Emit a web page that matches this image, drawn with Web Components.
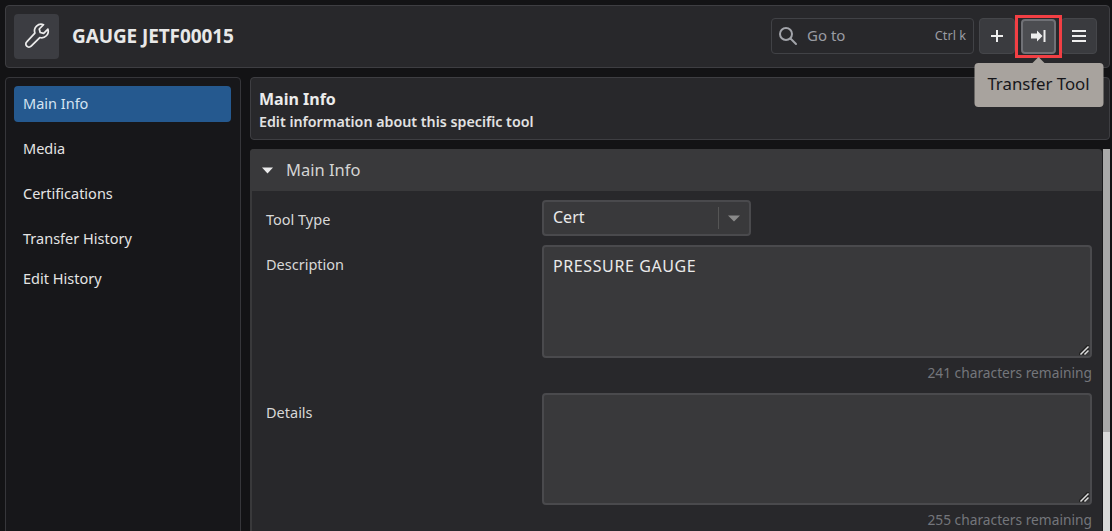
<!DOCTYPE html>
<html>
<head>
<meta charset="utf-8">
<style>
  html, body { margin: 0; height: 100%; overflow: hidden; }
  body { background: #131315; color: #e6e6e6; font: 14px "Noto Sans", sans-serif; }
</style>
</head>
<body>
<tool-app>
  <tool-header slot="header" title-text="GAUGE JETF00015"></tool-header>
  <side-nav slot="nav">
    <nav-item active>Main Info</nav-item>
    <nav-item>Media</nav-item>
    <nav-item>Certifications</nav-item>
    <nav-item>Transfer History</nav-item>
    <nav-item style="margin-top:-5px">Edit History</nav-item>
  </side-nav>
  <page-title slot="main" heading="Main Info" sub="Edit information about this specific tool"></page-title>
  <main-panel slot="main" heading="Main Info">
    <form-row label="Tool Type" style="margin-bottom:9px"><select-box value="Cert"></select-box></form-row>
    <form-row label="Description" style="margin-bottom:11px"><text-box value="PRESSURE GAUGE" remaining="241 characters remaining" box-height="113"></text-box></form-row>
    <form-row label="Details"><text-box remaining="255 characters remaining" box-height="112"></text-box></form-row>
  </main-panel>
</tool-app>
<script>
class ToolApp extends HTMLElement {
  constructor() {
    super();
    this.attachShadow({ mode: 'open' }).innerHTML = `
    <style>
      :host { display: flex; flex-direction: column; gap: 9px; padding: 5px 2px 0 5px; box-sizing: border-box; height: 531px; overflow: hidden; }
      .cols { display: flex; gap: 9px; flex: 1; min-height: 0; }
      .main { flex: 1; min-width: 0; display: flex; flex-direction: column; gap: 9px; }
    </style>
    <slot name="header"></slot>
    <div class="cols">
      <slot name="nav"></slot>
      <div class="main"><slot name="main"></slot></div>
    </div>`;
  }
}
customElements.define('tool-app', ToolApp);

class ToolHeader extends HTMLElement {
  connectedCallback() {
    this.attachShadow({ mode: 'open' }).innerHTML = `
    <style>
      :host { display: flex; align-items: center; height: 63px; box-sizing: border-box; background: #28282b; border: 1px solid #3e3e42; border-radius: 4px; padding: 0 12px 0 8px; }
      .logo { width: 45px; height: 45px; border-radius: 4px; background: #3c3d42; display: flex; align-items: center; justify-content: center; }
      h1 { margin: 0 0 2px 13px; font-size: 19px; font-weight: 700; color: #e8e8e8; flex: 1; letter-spacing: -.1px; }
      .search { width: 203px; height: 36px; margin-bottom: 1px; box-sizing: border-box; border: 1px solid #414246; border-radius: 4px; display: flex; align-items: center; padding: 0 7px 0 6px; color: #9a9ca3; }
      .search span { margin: 0 0 3px 9px; font-size: 15px; flex: 1; }
      .search small { font-size: 12.700px; margin-bottom: 3px; }
      .btn { width: 36px; height: 36px; margin-bottom: 1px; box-sizing: border-box; margin-left: 5px; background: #3a3b3f; border: 1px solid #45464a; border-radius: 4px; display: flex; align-items: center; justify-content: center; }
      .hot { position: relative; background: #4c4d51; border: 2px solid #707176; width: 35px; height: 35px; margin-left: 6px; margin-right: 5px; }
      .ring { position: absolute; inset: -6px -8px -6px -8px; border: 3px solid #f23f44; pointer-events: none; }
      .tip { position: absolute; top: 42px; left: 50%; transform: translateX(-50%); width: 129px; height: 44px; box-sizing: border-box; background: #a8a39e; color: #16161a; border-radius: 4px; display: flex; align-items: center; justify-content: center; font-size: 16.800px; white-space: nowrap; padding-bottom: 2px; }
      .tip::before { content: ""; position: absolute; top: -6px; left: 50%; margin-left: -6px; border: 6px solid transparent; border-top: 0; border-bottom-color: #a8a39e; }
    </style>
    <div class="logo">
      <svg width="32" height="32" viewBox="0 0 24 24" fill="none" stroke="#ececec" stroke-width="1.300" stroke-linejoin="round" stroke-linecap="round"><path d="M20.2 6.1l-3.2 3.2-2.6-.7-.7-2.6 3.2-3.2a5 5 0 0 0-6.5 6.3L4.300 15.600a2.300 2.300 0 0 0 3.300 3.300l6.500-6.500a5 5 0 0 0 6.100-6.300z"/></svg>
    </div>
    <h1>${this.getAttribute('title-text')}</h1>
    <div class="search">
      <svg width="20" height="20" viewBox="0 0 20 20" fill="none" stroke="#a2a4aa" stroke-width="2"><circle cx="8" cy="8" r="6"/><path d="M12.500 12.500L18 18" stroke-linecap="round"/></svg>
      <span>Go to</span><small>Ctrl k</small>
    </div>
    <div class="btn"><svg width="14" height="14" viewBox="0 0 14 14" stroke="#eee" stroke-width="2"><path d="M7 1v12M1 7h12"/></svg></div>
    <div class="btn hot">
      <svg width="15" height="12" viewBox="0 0 15 12"><path fill="#eee" d="M0 3.500h6V.500L11.500 6 6 11.500v-3H0z"/><rect x="12.500" y="0" width="2" height="12" fill="#eee"/></svg>
      <div class="ring"></div>
      <div class="tip">Transfer Tool</div>
    </div>
    <div class="btn" style="margin-left:0"><svg width="14" height="12" viewBox="0 0 14 12" fill="#eee"><rect y="0" width="14" height="2"/><rect y="5" width="14" height="2"/><rect y="10" width="14" height="2"/></svg></div>`;
  }
}
customElements.define('tool-header', ToolHeader);

class SideNav extends HTMLElement {
  constructor() {
    super();
    this.attachShadow({ mode: 'open' }).innerHTML = `
    <style>
      :host { display: flex; flex-direction: column; gap: 9px; width: 236px; box-sizing: border-box; background: #17171a; border: 1px solid #36363a; border-radius: 4px; padding: 8px 9px 0 8px; margin-bottom: -8px; }
    </style>
    <slot></slot>`;
  }
}
customElements.define('side-nav', SideNav);

class NavItem extends HTMLElement {
  constructor() {
    super();
    this.attachShadow({ mode: 'open' }).innerHTML = `
    <style>
      :host { display: flex; align-items: center; height: 36px; box-sizing: border-box; padding: 0 9px 2px; border-radius: 4px; color: #e4e4e4; font-size: 14.500px; }
      :host([active]) { background: #25598f; color: #d5e4f2; }
    </style>
    <slot></slot>`;
  }
}
customElements.define('nav-item', NavItem);

class PageTitle extends HTMLElement {
  connectedCallback() {
    this.attachShadow({ mode: 'open' }).innerHTML = `
    <style>
      :host { display: block; height: 63px; box-sizing: border-box; background: #28282b; border: 1px solid #3e3e42; border-radius: 4px; padding: 11px 8px 0; }
      b { display: block; font-size: 16px; line-height: 20px; color: #ececec; }
      span { display: block; font-size: 14.250px; font-weight: 600; line-height: 26px; color: #e2e2e2; }
    </style>
    <b>${this.getAttribute('heading')}</b>
    <span>${this.getAttribute('sub')}</span>`;
  }
}
customElements.define('page-title', PageTitle);

class MainPanel extends HTMLElement {
  connectedCallback() {
    this.attachShadow({ mode: 'open' }).innerHTML = `
    <style>
      :host { display: flex; flex: 1; min-height: 0; margin-bottom: -8px; }
      .panel { flex: 1; min-width: 0; background: #28282b; border-radius: 4px 4px 0 0; border-left: 2px solid #39393b; }
      .head { height: 42px; box-sizing: border-box; background: #39393b; display: flex; align-items: center; font-size: 16.500px; color: #d4d4d4; border-radius: 4px 4px 0 0; margin-left: -2px; padding: 0 0 2px 12px; }
      .head svg { margin: 2px 13px 0 0; }
      .body { padding: 9px 10px 0 14px; display: flex; flex-direction: column; }
      .bar { width: 8px; background: #1a1a1c; }
      .bar i { display: block; height: 100%; width: 7px; margin-left: 1px; background: linear-gradient(#a9a9a9 283px, #d9d9d9 283px); }
    </style>
    <div class="panel">
      <div class="head"><svg width="11" height="7" viewBox="0 0 11 7"><path d="M0 .500h11L5.500 6.500z" fill="#ececec"/></svg>${this.getAttribute('heading')}</div>
      <div class="body"><slot></slot></div>
    </div>
    <div class="bar"><i></i></div>`;
  }
}
customElements.define('main-panel', MainPanel);

class FormRow extends HTMLElement {
  connectedCallback() {
    this.attachShadow({ mode: 'open' }).innerHTML = `
    <style>
      :host { display: grid; grid-template-columns: 276px 1fr; margin-bottom: 10px; }
      label { font-size: 14.500px; color: #d8d8d8; padding-top: 9px; line-height: 20px; }
    </style>
    <label>${this.getAttribute('label')}</label>
    <div><slot></slot></div>`;
  }
}
customElements.define('form-row', FormRow);

class SelectBox extends HTMLElement {
  connectedCallback() {
    this.attachShadow({ mode: 'open' }).innerHTML = `
    <style>
      :host { display: flex; align-items: center; width: 209px; height: 36px; box-sizing: border-box; background: #39393b; border: 2px solid #4a4a4d; border-radius: 4px; padding-left: 9px; color: #eaeaea; font-size: 16px; }
      span { flex: 1; margin-bottom: 2px; }
      i { width: 1px; height: 22px; background: #555; margin-right: 9px; }
      svg { margin-right: 9px; }
    </style>
    <span>${this.getAttribute('value')}</span><i></i>
    <svg width="12" height="7" viewBox="0 0 12 7"><path d="M0 .500h12L6 6.500z" fill="#8a8a8a"/></svg>`;
  }
}
customElements.define('select-box', SelectBox);

class TextBox extends HTMLElement {
  connectedCallback() {
    this.attachShadow({ mode: 'open' }).innerHTML = `
    <style>
      :host { display: block; }
      .box { position: relative; height: ${this.getAttribute('box-height')}px; box-sizing: border-box; background: #39393b; border: 2px solid #4a4a4d; border-radius: 4px; padding: 9px; font-size: 16px; letter-spacing: .6px; color: #eaeaea; line-height: 20px; }
      svg { position: absolute; right: 1px; bottom: 1px; }
      small { display: block; text-align: right; font-size: 13.750px; line-height: 18px; color: #74767b; margin-top: 6px; }
    </style>
    <div class="box">${this.getAttribute('value') || ''}
      <svg width="10" height="10" viewBox="0 0 10 10" stroke-linecap="square"><path d="M9 1L1 9M9 5L5 9" stroke="#222" stroke-width="3"/><path d="M9 2L2 9M9 6L6 9" stroke="#ddd" stroke-width="1.500"/></svg>
    </div>
    <small>${this.getAttribute('remaining')}</small>`;
  }
}
customElements.define('text-box', TextBox);
</script>
</body>
</html>
